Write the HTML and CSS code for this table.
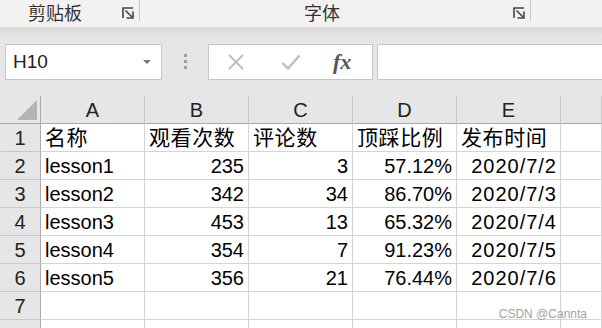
FILE: index.html
```html
<!DOCTYPE html>
<html lang="zh-CN">
<head>
    <meta charset="UTF-8">
    <title>工作簿1 - Excel</title>
    <link rel="stylesheet" href="styles.css">
</head>
<body>

    <div class="ribbon">
        <div class="group group-clipboard">
            <span class="group-label">剪贴板</span>
            <svg class="launcher" width="12" height="12" viewBox="0 0 12 12">
                <path d="M1 11 V1 H11" fill="none" stroke="#444" stroke-width="1.6"/>
                <path d="M3.5 3.5 L10 10" fill="none" stroke="#444" stroke-width="1.6"/>
                <path d="M4.5 11 H11 V4.5" fill="none" stroke="#444" stroke-width="1.6"/>
            </svg>
        </div>
        <div class="group group-font">
            <span class="group-label">字体</span>
            <svg class="launcher" width="12" height="12" viewBox="0 0 12 12">
                <path d="M1 11 V1 H11" fill="none" stroke="#444" stroke-width="1.6"/>
                <path d="M3.5 3.5 L10 10" fill="none" stroke="#444" stroke-width="1.6"/>
                <path d="M4.5 11 H11 V4.5" fill="none" stroke="#444" stroke-width="1.6"/>
            </svg>
        </div>
    </div>

    <div class="formula-bar">
        <div class="name-box">
            <span>H10</span>
            <svg width="8" height="4" viewBox="0 0 8 4"><path d="M0 0 H8 L4 4 Z" fill="#777"/></svg>
        </div>
        <div class="grip"><i></i><i></i><i></i></div>
        <div class="fx-buttons">
            <svg width="18" height="18" viewBox="0 0 18 18">
                <path d="M2 2 L16 16 M16 2 L2 16" stroke="#bdbdbd" stroke-width="1.8" fill="none"/>
            </svg>
            <svg width="20" height="18" viewBox="0 0 20 18">
                <path d="M1.5 10 L7 15.5 L18.5 2.5" stroke="#bdbdbd" stroke-width="2.4" fill="none"/>
            </svg>
            <span class="fx">fx</span>
        </div>
        <div class="formula-input"></div>
    </div>

    <div class="sheet">
        <div class="corner"><span class="corner-mark"></span></div>
        <div class="col-head">A</div>
        <div class="col-head">B</div>
        <div class="col-head">C</div>
        <div class="col-head">D</div>
        <div class="col-head">E</div>
        <div class="col-head"></div>

        <div class="row-head">1</div>
        <div class="cell title">名称</div>
        <div class="cell title">观看次数</div>
        <div class="cell title">评论数</div>
        <div class="cell title">顶踩比例</div>
        <div class="cell title">发布时间</div>
        <div class="cell"></div>

        <div class="row-head">2</div>
        <div class="cell">lesson1</div>
        <div class="cell num">235</div>
        <div class="cell num">3</div>
        <div class="cell num">57.12%</div>
        <div class="cell num date">2020/7/2</div>
        <div class="cell"></div>

        <div class="row-head">3</div>
        <div class="cell">lesson2</div>
        <div class="cell num">342</div>
        <div class="cell num">34</div>
        <div class="cell num">86.70%</div>
        <div class="cell num date">2020/7/3</div>
        <div class="cell"></div>

        <div class="row-head">4</div>
        <div class="cell">lesson3</div>
        <div class="cell num">453</div>
        <div class="cell num">13</div>
        <div class="cell num">65.32%</div>
        <div class="cell num date">2020/7/4</div>
        <div class="cell"></div>

        <div class="row-head">5</div>
        <div class="cell">lesson4</div>
        <div class="cell num">354</div>
        <div class="cell num">7</div>
        <div class="cell num">91.23%</div>
        <div class="cell num date">2020/7/5</div>
        <div class="cell"></div>

        <div class="row-head">6</div>
        <div class="cell">lesson5</div>
        <div class="cell num">356</div>
        <div class="cell num">21</div>
        <div class="cell num">76.44%</div>
        <div class="cell num date">2020/7/6</div>
        <div class="cell"></div>

        <div class="row-head">7</div>
        <div class="cell"></div>
        <div class="cell"></div>
        <div class="cell"></div>
        <div class="cell"></div>
        <div class="cell"></div>
        <div class="cell"></div>

        <div class="row-head"></div>
        <div class="cell"></div>
        <div class="cell"></div>
        <div class="cell"></div>
        <div class="cell"></div>
        <div class="cell"></div>
        <div class="cell"></div>
    </div>

    <div class="watermark">CSDN @Cannta</div>

</body>
</html>
```

FILE: styles.css
```css
body {
    margin: 0;
    width: 602px;
    height: 328px;
    overflow: hidden;
    position: relative;
    background-color: #e6e6e6;
    font-family: "Liberation Sans", "Noto Sans CJK SC", sans-serif;
    color: #000;
}

/* ribbon strip */
.ribbon {
    display: flex;
    height: 27px;
    background-color: #f3f2f1;
}

.group {
    display: flex;
    align-items: center;
    height: 21px;
    padding-top: 2px;
    border-right: 1px solid #c6c6c6;
    box-sizing: border-box;
    padding-right: 5px;
}

.group-clipboard {
    width: 140px;
    padding-left: 28px;
}

.group-font {
    width: 391px;
    padding-left: 164px;
}

.group-label {
    font-size: 18px;
    color: #333;
    line-height: 1;
    margin-top: 4px;
}

.launcher {
    margin-left: auto;
    margin-top: 3px;
}

/* name box + formula input */
.formula-bar {
    display: flex;
    align-items: center;
    height: 69px;
    padding: 0 0 0 5px;
    box-sizing: border-box;
    background: linear-gradient(#d8d8d8, #e6e6e6 9px);
}

.name-box,
.fx-buttons,
.formula-input {
    height: 36px;
    box-sizing: border-box;
    background-color: #fff;
    border: 1px solid #c6c6c6;
    margin-top: 1px;
}

.name-box {
    width: 157px;
    display: flex;
    align-items: center;
    justify-content: space-between;
    padding: 0 10px 0 7px;
    font-size: 19px;
    color: #222;
}

.grip {
    display: flex;
    flex-direction: column;
    gap: 3px;
    width: 46px;
    align-items: center;
}

.grip i {
    display: block;
    width: 3px;
    height: 3px;
    background-color: #a0a0a0;
}

.fx-buttons {
    width: 165px;
    display: flex;
    align-items: center;
    gap: 36px;
    padding-left: 18px;
}

.fx {
    font-family: "Liberation Serif", serif;
    font-style: italic;
    font-weight: bold;
    font-size: 22px;
    color: #555;
    margin-left: -4px;
}

.formula-input {
    flex: 1;
    margin-left: 4px;
    border-right: none;
}

/* worksheet grid */
.sheet {
    display: grid;
    grid-template-columns: 41px repeat(5, 104px) 1fr;
    grid-auto-rows: 28px;
    background-color: #fff;
}

.sheet > div {
    box-sizing: border-box;
    border-right: 1px solid #d4d4d4;
    border-bottom: 1px solid #d4d4d4;
    font-size: 20px;
    line-height: 28px;
    white-space: nowrap;
    overflow: hidden;
}

.corner {
    position: relative;
    background-color: #e6e6e6;
}

.corner-mark {
    position: absolute;
    right: 3px;
    bottom: 3px;
    width: 0;
    height: 0;
    border-left: 20px solid transparent;
    border-bottom: 20px solid #b4b4b4;
}

.sheet > .col-head {
    background-color: #e6e6e6;
    text-align: center;
    color: #222;
    border-right-color: #c8c8c8;
    border-bottom-color: #ababab;
}

.sheet > .corner {
    border-bottom-color: #ababab;
    border-right-color: #ababab;
}

.sheet > .row-head {
    background-color: #e6e6e6;
    text-align: center;
    color: #222;
    border-right-color: #ababab;
    border-bottom-color: #c8c8c8;
}

.cell {
    padding: 0 4px;
}

.cell.num {
    text-align: right;
}

.cell.date {
    letter-spacing: 1px;
    padding-right: 3px;
}

.sheet > .title {
    font-size: 21px;
    letter-spacing: 0.6px;
}

.watermark {
    position: absolute;
    right: 15px;
    bottom: 7px;
    font-size: 12px;
    color: #a3a3a3;
}
```
